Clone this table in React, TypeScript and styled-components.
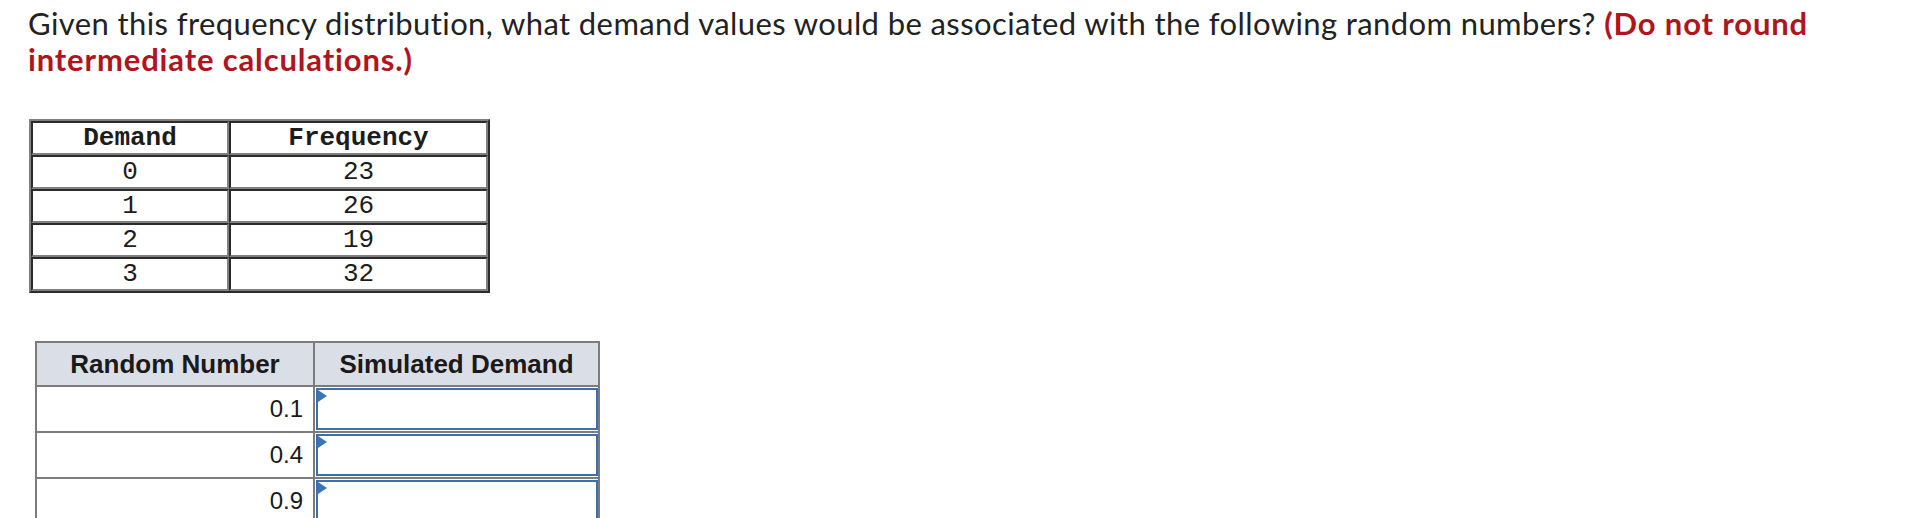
import styled, { createGlobalStyle } from 'styled-components';

const GlobalStyle = createGlobalStyle`
  html, body {
    margin: 0;
    padding: 0;
    background: #ffffff;
    overflow: hidden;
  }
`;

const frequencies = [
  { demand: 0, count: 23 },
  { demand: 1, count: 26 },
  { demand: 2, count: 19 },
  { demand: 3, count: 32 },
];

const randomNumbers = ['0.1', '0.4', '0.9'];

export default function App() {
  return (
    <Page>
      <GlobalStyle />
      <Question>
        Given this frequency distribution, what demand values would be
        associated with the following random numbers?{' '}
        <Hint>
          (Do not round
          <br />
          intermediate calculations.)
        </Hint>
      </Question>

      <FreqTable cellSpacing={0}>
        <tbody>
          <tr>
            <FreqHead $width={194}>Demand</FreqHead>
            <FreqHead>Frequency</FreqHead>
          </tr>
          {frequencies.map((row) => (
            <tr key={row.demand}>
              <FreqCell>{row.demand}</FreqCell>
              <FreqCell>{row.count}</FreqCell>
            </tr>
          ))}
        </tbody>
      </FreqTable>

      <AnswerTable>
        <thead>
          <tr>
            <AnswerHead $width={276}>Random Number</AnswerHead>
            <AnswerHead>Simulated Demand</AnswerHead>
          </tr>
        </thead>
        <tbody>
          {randomNumbers.map((num) => (
            <tr key={num}>
              <NumberCell>{num}</NumberCell>
              <InputCell>
                <AnswerBox>
                  <Marker />
                </AnswerBox>
              </InputCell>
            </tr>
          ))}
        </tbody>
      </AnswerTable>
    </Page>
  );
}

const Page = styled.div`
  padding: 5px 0 0 28px;
`;

const Question = styled.p`
  margin: 0;
  font-family: Lato, 'Open Sans', sans-serif;
  font-size: 31px;
  line-height: 36px;
  color: #222222;
  letter-spacing: 0.4px;
`;

const Hint = styled.span`
  color: #b0141c;
  font-weight: 700;
  letter-spacing: 0.85px;
`;

const FreqTable = styled.table`
  margin: 42px 0 0 1px;
  border-collapse: separate;
  border-style: solid;
  border-width: 2px;
  border-color: #808080 #2b2b2b #2b2b2b #808080;
`;

const FreqHead = styled.th<{ $width?: number }>`
  width: ${(p) => (p.$width ? `${p.$width}px` : 'auto')};
  min-width: ${(p) => (p.$width ? '0' : '255px')};
  height: 30px;
  padding: 0;
  border-style: solid;
  border-width: 2px;
  border-color: #2b2b2b #808080 #808080 #2b2b2b;
  font-family: 'Liberation Mono', 'Courier New', monospace;
  font-size: 26px;
  font-weight: 700;
  color: #1c1c1c;
  text-align: center;
`;

const FreqCell = styled.td`
  height: 30px;
  padding: 0;
  border-style: solid;
  border-width: 2px;
  border-color: #2b2b2b #808080 #808080 #2b2b2b;
  font-family: 'Liberation Mono', 'DejaVu Sans Mono', monospace;
  font-size: 26px;
  color: #1c1c1c;
  text-align: center;
`;

const AnswerTable = styled.table`
  margin: 48px 0 0 7px;
  border-collapse: collapse;
  width: 565px;
  font-family: 'Liberation Sans', Arial, sans-serif;
  color: #1a1a1a;
`;

const AnswerHead = styled.th<{ $width?: number }>`
  width: ${(p) => (p.$width ? `${p.$width}px` : 'auto')};
  height: 42px;
  padding: 0;
  border: 2px solid #7c7c7c;
  background: #d9dee7;
  font-size: 26px;
  font-weight: 700;
  text-align: center;
`;

const NumberCell = styled.td`
  height: 44px;
  padding: 0 10px 0 0;
  border: 2px solid #7c7c7c;
  font-size: 24px;
  text-align: right;
  vertical-align: middle;
`;

const InputCell = styled.td`
  padding: 1px 0 1px 1px;
  border: 2px solid #7c7c7c;
  vertical-align: top;
`;

const AnswerBox = styled.div`
  position: relative;
  box-sizing: border-box;
  height: 42px;
  border: 2px solid #3b6fae;
  background: #ffffff;
`;

const Marker = styled.span`
  position: absolute;
  top: 0;
  left: 0;
  width: 0;
  height: 0;
  border-style: solid;
  border-width: 6px 0 6px 9px;
  border-color: transparent transparent transparent #3b74b8;
`;
